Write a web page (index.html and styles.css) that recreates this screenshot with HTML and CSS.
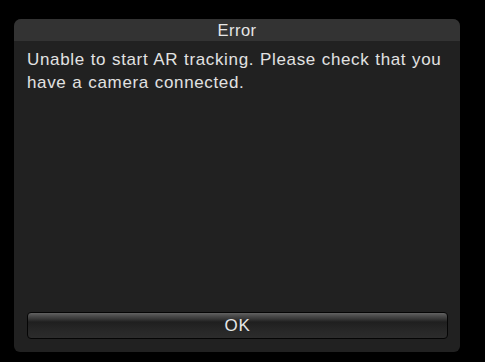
FILE: index.html
```html
<!DOCTYPE html>
<html>
<head>
<meta charset="utf-8">
<link rel="stylesheet" href="styles.css">
</head>
<body>
<div class="dialog">
  <div class="title">Error</div>
  <div class="body">
    <p class="msg">Unable to start AR tracking. Please check that you have a camera connected.</p>
    <button class="ok">OK</button>
  </div>
</div>
</body>
</html>
```
FILE: styles.css
```css
html, body {
  margin: 0;
  padding: 0;
  background: #000;
  width: 485px;
  height: 362px;
  overflow: hidden;
}
body {
  padding: 19px 0 0 14px;
  box-sizing: border-box;
  font-family: "Liberation Sans", Arial, sans-serif;
}
.dialog {
  width: 446px;
  height: 333px;
  background: #212121;
  border-radius: 7px 7px 6px 6px;
  display: flex;
  flex-direction: column;
  overflow: hidden;
}
.title {
  height: 22px;
  background: #333333;
  color: #e6e6e6;
  font-size: 16.5px;
  letter-spacing: 0.5px;
  line-height: 23px;
  text-align: center;
}
.body {
  flex: 1;
  display: flex;
  flex-direction: column;
  padding: 7px 12px 13px 13px;
}
.msg {
  margin: 0;
  flex: 1;
  color: #e2e2e2;
  font-size: 17px;
  letter-spacing: 0.65px;
  word-spacing: 0.5px;
  line-height: 23px;
}
.ok {
  height: 27px;
  width: 421px;
  border: 1px solid #050505;
  border-radius: 4px;
  background: linear-gradient(#626262 0px, #4a4a4a 3px, #363636 6px, #1f1f1f 9px, #262626 16px, #2c2c2c 25px);
  color: #e6e6e6;
  font-family: "Liberation Sans", Arial, sans-serif;
  font-size: 17px;
  letter-spacing: 0.7px;
  line-height: 25px;
  padding: 0;
}
```
